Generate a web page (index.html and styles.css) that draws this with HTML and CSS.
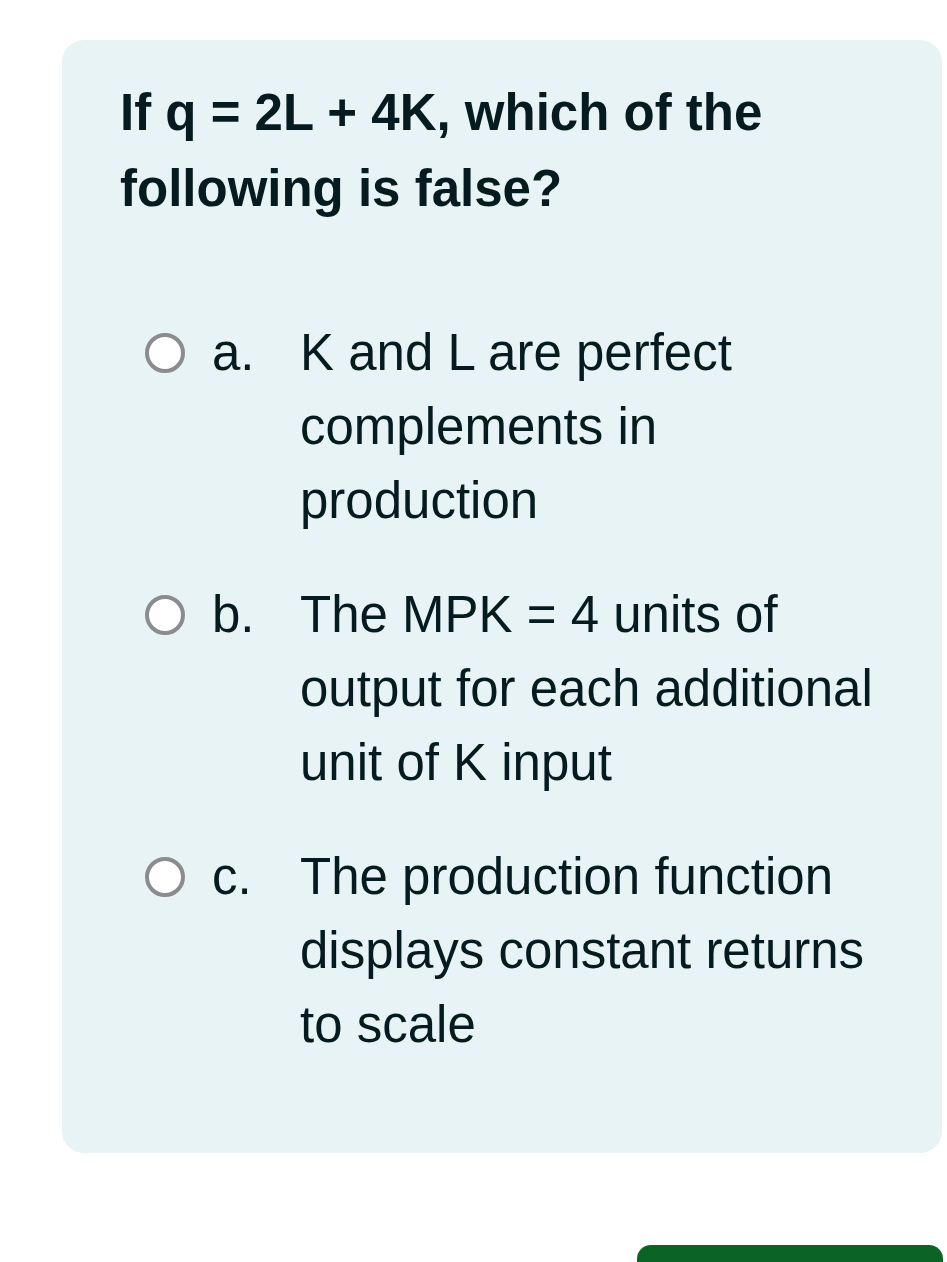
FILE: index.html
```html
<!DOCTYPE html>
<html lang="en">
<head>
<meta charset="utf-8">
<title>Question</title>
<link rel="stylesheet" href="styles.css">
</head>
<body>
<main class="page">
  <section class="card">
    <h1 class="question">If q = 2L + 4K, which of the following is false?</h1>
    <ul class="options">
      <li class="option">
        <span class="radio"></span>
        <span class="letter">a.</span>
        <span class="text">K and L are perfect complements in production</span>
      </li>
      <li class="option">
        <span class="radio"></span>
        <span class="letter">b.</span>
        <span class="text">The MPK = 4 units of output for each additional unit of K input</span>
      </li>
      <li class="option">
        <span class="radio"></span>
        <span class="letter">c.</span>
        <span class="text">The production function displays constant returns to scale</span>
      </li>
    </ul>
  </section>
  <div class="actions">
    <button class="next" type="button"></button>
  </div>
</main>
</body>
</html>
```

FILE: styles.css
```css
html, body {
  margin: 0;
  padding: 0;
  background: #ffffff;
  overflow: hidden;
  height: 1262px;
}

body {
  font-family: "Liberation Sans", Arial, Helvetica, sans-serif;
  color: #061b20;
}

.page {
  padding: 40px 5px 0 62px;
}

.card {
  background: #e7f3f5;
  border-radius: 22px;
  padding: 35px 58px 51px 58px;
}

.question {
  margin: 0;
  font-size: 51px;
  font-weight: 700;
  line-height: 76px;
}

.options {
  list-style: none;
  margin: 89px 0 0 0;
  padding: 0;
}

.option {
  display: grid;
  grid-template-columns: 40px 61px 1fr;
  column-gap: 27px;
  align-items: start;
  font-size: 51px;
  line-height: 74px;
  margin-bottom: 40px;
  margin-left: 25px;
}

.radio {
  box-sizing: border-box;
  width: 40px;
  height: 40px;
  margin-top: 17px;
  border: 4px solid #8c8c90;
  border-radius: 50%;
  background: #ffffff;
}

.letter {
  display: block;
}

.text {
  display: block;
  max-width: 584px;
}

.actions {
  display: flex;
  justify-content: flex-end;
  margin-top: 92px;
}

.next {
  width: 306px;
  height: 70px;
  border: none;
  border-radius: 14px;
  background: #0b6325;
  margin-right: -1px;
}
```
